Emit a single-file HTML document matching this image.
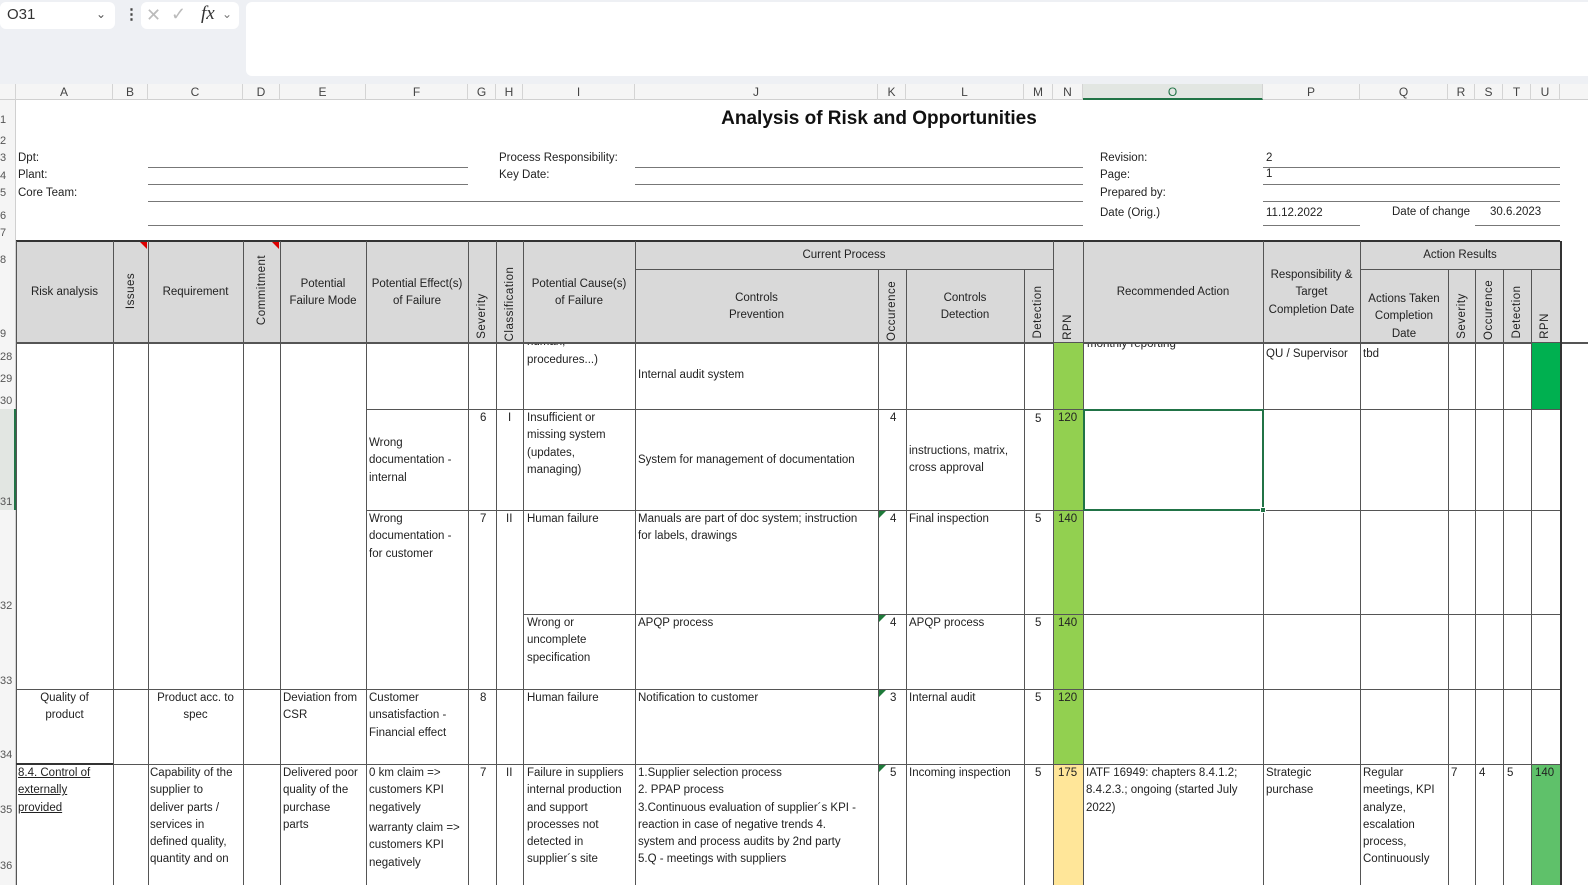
<!DOCTYPE html>
<html><head><meta charset="utf-8"><style>
*{margin:0;padding:0;box-sizing:border-box}
body{width:1588px;height:885px;overflow:hidden;background:#fff;font-family:"Liberation Sans",Arial,sans-serif;position:relative;color:#222}
div{position:absolute}
.v{width:1px;background:#555}
.h{height:1px;background:#555}
.t{font-size:11.5px;line-height:17.3px;white-space:pre-line}
.c{text-align:center}
.rot{transform:rotate(-90deg);transform-origin:center;font-size:11.5px;white-space:nowrap;text-align:center;letter-spacing:.5px}
.ch{top:84px;height:16px;font-size:12px;color:#444;text-align:center;line-height:16px;border-right:1px solid #d4d4d4}
.rn{left:0;font-size:11px;color:#555;width:14px;text-align:left}
.ul{height:1px;background:#777}
.tri{width:0;height:0;border-top:7px solid #1e7a3a;border-right:7px solid transparent}
</style></head><body>
<!-- formula bar -->
<div style="left:0;top:0;width:1588px;height:84px;background:#eef0f4"></div>
<div style="left:0;top:2px;width:115px;height:27px;background:#fff;border-radius:6px"></div>
<div style="left:7px;top:6px;font-size:15px;color:#333">O31</div>
<div style="left:96px;top:7px;font-size:12px;color:#555">&#8964;</div>
<div style="left:124px;top:5px;font-size:15px;color:#444;font-weight:bold">&#8942;</div>
<div style="left:141px;top:2px;width:98px;height:27px;background:#fff;border-radius:6px"></div>
<div style="left:146px;top:5px;font-size:18px;color:#bbb">&#10005;</div>
<div style="left:171px;top:4px;font-size:18px;color:#bbb">&#10003;</div>
<div style="left:201px;top:3px;font-size:19px;font-style:italic;font-family:'Liberation Serif',serif;color:#333">fx</div>
<div style="left:222px;top:7px;font-size:12px;color:#777">&#8964;</div>
<div style="left:246px;top:2px;width:1342px;height:74px;background:#fff;border-radius:6px 0 0 6px"></div>
<!-- column headers -->
<div style="left:0;top:84px;width:1588px;height:16px;background:#f5f5f5;border-bottom:1px solid #d0d0d0"></div>
<div class="ch" style="left:0;width:16px"></div>
<div class="ch" style="left:16px;width:97px">A</div><div class="ch" style="left:113px;width:35px">B</div><div class="ch" style="left:148px;width:95px">C</div><div class="ch" style="left:243px;width:37px">D</div><div class="ch" style="left:280px;width:86px">E</div><div class="ch" style="left:366px;width:102px">F</div><div class="ch" style="left:468px;width:28px">G</div><div class="ch" style="left:496px;width:27px">H</div><div class="ch" style="left:523px;width:112px">I</div><div class="ch" style="left:635px;width:243px">J</div><div class="ch" style="left:878px;width:28px">K</div><div class="ch" style="left:906px;width:118px">L</div><div class="ch" style="left:1024px;width:29px">M</div><div class="ch" style="left:1053px;width:30px">N</div><div class="ch" style="left:1083px;width:180px;background:#e2e6e2;border-bottom:2px solid #217346;color:#217346">O</div><div class="ch" style="left:1263px;width:97px">P</div><div class="ch" style="left:1360px;width:88px">Q</div><div class="ch" style="left:1448px;width:27px">R</div><div class="ch" style="left:1475px;width:28px">S</div><div class="ch" style="left:1503px;width:28px">T</div><div class="ch" style="left:1531px;width:29px">U</div>
<!-- row header col -->
<div style="left:0;top:100px;width:16px;height:785px;background:#f5f5f5;border-right:1px solid #d0d0d0"></div>
<div style="left:0;top:409px;width:16px;height:101px;background:#e2e6e2;border-right:2px solid #217346"></div>
<div class="rn" style="top:114px">1</div><div class="rn" style="top:135px">2</div><div class="rn" style="top:152px">3</div><div class="rn" style="top:170px">4</div><div class="rn" style="top:187px">5</div><div class="rn" style="top:210px">6</div><div class="rn" style="top:227px">7</div><div class="rn" style="top:254px">8</div><div class="rn" style="top:328px">9</div><div class="rn" style="top:351px">28</div><div class="rn" style="top:373px">29</div><div class="rn" style="top:395px">30</div><div class="rn" style="top:496px">31</div><div class="rn" style="top:600px">32</div><div class="rn" style="top:675px">33</div><div class="rn" style="top:749px">34</div><div class="rn" style="top:804px">35</div><div class="rn" style="top:860px">36</div>
<!-- title/form -->
<div style="left:635px;top:108px;width:488px;text-align:center;font-size:19px;font-weight:bold;color:#111">Analysis of Risk and Opportunities</div>
<div class="t" style="left:18px;top:150px">Dpt:</div><div class="t" style="left:18px;top:167px">Plant:</div><div class="t" style="left:18px;top:185px">Core Team:</div>
<div class="t" style="left:499px;top:150px">Process Responsibility:</div><div class="t" style="left:499px;top:167px">Key Date:</div>
<div class="t" style="left:1100px;top:150px">Revision:</div><div class="t" style="left:1100px;top:167px">Page:</div><div class="t" style="left:1100px;top:185px">Prepared by:</div><div class="t" style="left:1100px;top:205px">Date (Orig.)</div>
<div class="t" style="left:1266px;top:150px">2</div><div class="t" style="left:1266px;top:166px">1</div><div class="t" style="left:1266px;top:205px">11.12.2022</div><div class="t" style="left:1392px;top:204px">Date of change</div><div class="t" style="left:1490px;top:204px">30.6.2023</div>
<div class="ul" style="left:148px;top:167px;width:320px"></div><div class="ul" style="left:148px;top:184px;width:320px"></div>
<div class="ul" style="left:635px;top:167px;width:448px"></div><div class="ul" style="left:635px;top:184px;width:448px"></div>
<div class="ul" style="left:148px;top:201px;width:935px"></div><div class="ul" style="left:148px;top:225px;width:935px"></div>
<div class="ul" style="left:1263px;top:167px;width:297px"></div><div class="ul" style="left:1263px;top:184px;width:297px"></div><div class="ul" style="left:1263px;top:201px;width:297px"></div>
<div class="ul" style="left:1263px;top:225px;width:97px"></div><div class="ul" style="left:1475px;top:225px;width:85px"></div>
<!-- header band -->
<div style="left:16px;top:241px;width:1544px;height:102px;background:#d9d9d9"></div>
<div style="left:16px;top:240px;width:1544px;height:2px;background:#333"></div>
<div style="left:16px;top:342px;width:1572px;height:2px;background:#555"></div>
<div class="h" style="left:635px;top:269px;width:418px"></div><div class="h" style="left:1360px;top:269px;width:200px"></div>
<!-- green/yellow fills -->
<div style="left:1053px;top:343px;width:30px;height:421px;background:#92d050"></div>
<div style="left:1053px;top:764px;width:30px;height:121px;background:#ffe699"></div>
<div style="left:1531px;top:343px;width:29px;height:66px;background:#00b050"></div>
<div style="left:1531px;top:764px;width:29px;height:121px;background:#5fc16a"></div>
<!-- vertical lines -->
<div class="v" style="left:16px;top:241px;height:644px"></div>
<div class="v" style="left:113px;top:241px;height:644px"></div><div class="v" style="left:148px;top:241px;height:644px"></div><div class="v" style="left:243px;top:241px;height:644px"></div><div class="v" style="left:280px;top:241px;height:644px"></div><div class="v" style="left:366px;top:241px;height:644px"></div><div class="v" style="left:468px;top:241px;height:644px"></div><div class="v" style="left:496px;top:241px;height:644px"></div><div class="v" style="left:523px;top:241px;height:644px"></div><div class="v" style="left:635px;top:241px;height:644px"></div>
<div class="v" style="left:878px;top:269px;height:616px"></div><div class="v" style="left:906px;top:269px;height:616px"></div><div class="v" style="left:1024px;top:269px;height:616px"></div>
<div class="v" style="left:1053px;top:241px;height:644px"></div><div class="v" style="left:1083px;top:241px;height:644px"></div><div class="v" style="left:1263px;top:241px;height:644px"></div><div class="v" style="left:1360px;top:241px;height:644px"></div>
<div class="v" style="left:1448px;top:269px;height:616px"></div><div class="v" style="left:1475px;top:269px;height:616px"></div><div class="v" style="left:1503px;top:269px;height:616px"></div><div class="v" style="left:1531px;top:269px;height:616px"></div>
<div class="v" style="left:1560px;top:241px;height:644px;width:2px;background:#333"></div>
<!-- horizontal data lines -->
<div class="h" style="left:366px;top:409px;width:1194px"></div>
<div class="h" style="left:366px;top:510px;width:1194px"></div>
<div class="h" style="left:523px;top:614px;width:1037px"></div>
<div class="h" style="left:16px;top:689px;width:1544px"></div>
<div class="h" style="left:16px;top:764px;width:1544px"></div>
<div style="left:16px;top:763px;width:97px;height:2px;background:#333"></div>
<!-- selection -->
<div style="left:1083px;top:409px;width:181px;height:102px;border:2px solid #217346"></div>
<div style="left:1260px;top:507px;width:6px;height:6px;background:#217346;border:1px solid #fff"></div>
<!-- red comment marks -->
<div style="left:140px;top:242px;width:0;height:0;border-top:7px solid #d00;border-left:7px solid transparent"></div>
<div style="left:272px;top:242px;width:0;height:0;border-top:7px solid #d00;border-left:7px solid transparent"></div>
<!-- header text -->
<div class="t c" style="left:16px;top:284px;width:97px">Risk analysis</div>
<div class="rot" style="left:101px;top:285px;width:60px">Issues</div>
<div class="t c" style="left:148px;top:284px;width:95px">Requirement</div>
<div class="rot" style="left:222px;top:284px;width:80px">Commitment</div>
<div class="t c" style="left:280px;top:276px;width:86px">Potential
Failure Mode</div>
<div class="t c" style="left:366px;top:276px;width:102px">Potential Effect(s)
of Failure</div>
<div class="rot" style="left:452px;top:310px;width:60px">Severity</div>
<div class="rot" style="left:470px;top:298px;width:80px">Classification</div>
<div class="t c" style="left:523px;top:276px;width:112px">Potential Cause(s)
of Failure</div>
<div class="t c" style="left:635px;top:247px;width:418px">Current Process</div>
<div class="t c" style="left:635px;top:290px;width:243px">Controls
Prevention</div>
<div class="rot" style="left:862px;top:305px;width:60px">Occurence</div>
<div class="t c" style="left:906px;top:290px;width:118px">Controls
Detection</div>
<div class="rot" style="left:1008px;top:306px;width:60px">Detection</div>
<div class="rot" style="left:1048px;top:321px;width:40px">RPN</div>
<div class="t c" style="left:1083px;top:284px;width:180px">Recommended Action</div>
<div class="t c" style="left:1263px;top:267px;width:97px">Responsibility &amp;
Target
Completion Date</div>
<div class="t c" style="left:1360px;top:247px;width:200px">Action Results</div>
<div class="t c" style="left:1360px;top:291px;width:88px">Actions Taken
Completion
Date</div>
<div class="rot" style="left:1432px;top:310px;width:60px">Severity</div>
<div class="rot" style="left:1459px;top:304px;width:60px">Occurence</div>
<div class="rot" style="left:1487px;top:306px;width:60px">Detection</div>
<div class="rot" style="left:1525px;top:320px;width:40px">RPN</div>
<!-- data -->
<div style="left:524px;top:344px;width:110px;height:8px;overflow:hidden"><div class="t" style="left:3px;top:-10px">human,</div></div>
<div class="t" style="left:527px;top:352px">procedures...)</div>
<div class="t" style="left:638px;top:367px">Internal audit system</div>
<div style="left:907px;top:344px;width:116px;height:6px;overflow:hidden"><div class="t" style="left:3px;top:-11px">evaluation</div></div>
<div style="left:1084px;top:344px;width:178px;height:9px;overflow:hidden"><div class="t" style="left:3px;top:-8px">monthly reporting</div></div>
<div class="t" style="left:1266px;top:346px">QU / Supervisor</div>
<div class="t" style="left:1363px;top:346px">tbd</div>

<div class="t" style="left:369px;top:435px">Wrong
documentation -
internal</div>
<div class="t" style="left:480px;top:410px">6</div><div class="t" style="left:508px;top:410px">I</div>
<div class="t" style="left:527px;top:410px">Insufficient or
missing system
(updates,
managing)</div>
<div class="t" style="left:638px;top:452px">System for management of documentation</div>
<div class="t" style="left:890px;top:410px">4</div>
<div class="t" style="left:909px;top:443px">instructions, matrix,
cross approval</div>
<div class="t" style="left:1035px;top:411px">5</div><div class="t" style="left:1058px;top:410px">120</div>

<div class="t" style="left:369px;top:511px">Wrong
documentation -
for customer</div>
<div class="t" style="left:480px;top:511px">7</div><div class="t" style="left:506px;top:511px">II</div>
<div class="t" style="left:527px;top:511px">Human failure</div>
<div class="t" style="left:638px;top:511px">Manuals are part of doc system; instruction
for labels, drawings</div>
<div class="tri" style="left:879px;top:511px"></div>
<div class="t" style="left:890px;top:511px">4</div>
<div class="t" style="left:909px;top:511px">Final inspection</div>
<div class="t" style="left:1035px;top:511px">5</div><div class="t" style="left:1058px;top:511px">140</div>

<div class="t" style="left:527px;top:615px">Wrong or
uncomplete
specification</div>
<div class="t" style="left:638px;top:615px">APQP process</div>
<div class="tri" style="left:879px;top:615px"></div>
<div class="t" style="left:890px;top:615px">4</div>
<div class="t" style="left:909px;top:615px">APQP process</div>
<div class="t" style="left:1035px;top:615px">5</div><div class="t" style="left:1058px;top:615px">140</div>

<div class="t c" style="left:16px;top:690px;width:97px">Quality of
product</div>
<div class="t c" style="left:148px;top:690px;width:95px">Product acc. to
spec</div>
<div class="t" style="left:283px;top:690px">Deviation from
CSR</div>
<div class="t" style="left:369px;top:690px">Customer
unsatisfaction -
Financial effect</div>
<div class="t" style="left:480px;top:690px">8</div>
<div class="t" style="left:527px;top:690px">Human failure</div>
<div class="t" style="left:638px;top:690px">Notification to customer</div>
<div class="tri" style="left:879px;top:690px"></div>
<div class="t" style="left:890px;top:690px">3</div>
<div class="t" style="left:909px;top:690px">Internal audit</div>
<div class="t" style="left:1035px;top:690px">5</div><div class="t" style="left:1058px;top:690px">120</div>

<div class="t" style="left:18px;top:765px;text-decoration:underline;color:#222">8.4. Control of
externally
provided</div>
<div class="t" style="left:150px;top:765px">Capability of the
supplier to
deliver  parts /
services in
defined quality,
quantity and on</div>
<div class="t" style="left:283px;top:765px">Delivered poor
quality of the
purchase
parts</div>
<div class="t" style="left:369px;top:765px">0 km claim =&gt;
customers KPI
negatively</div>
<div class="t" style="left:369px;top:820px">warranty claim =&gt;
customers KPI
negatively</div>
<div class="t" style="left:480px;top:765px">7</div><div class="t" style="left:506px;top:765px">II</div>
<div class="t" style="left:527px;top:765px">Failure in suppliers
internal production
and support
processes not
detected in
supplier´s site</div>
<div class="t" style="left:638px;top:765px">1.Supplier selection process
2. PPAP process
3.Continuous evaluation of supplier´s KPI -
reaction in case of negative trends 4.
system and process audits by 2nd party
5.Q - meetings with suppliers</div>
<div class="tri" style="left:879px;top:765px"></div>
<div class="t" style="left:890px;top:765px">5</div>
<div class="t" style="left:909px;top:765px">Incoming inspection</div>
<div class="t" style="left:1035px;top:765px">5</div><div class="t" style="left:1058px;top:765px">175</div>
<div class="t" style="left:1086px;top:765px">IATF 16949: chapters 8.4.1.2;
8.4.2.3.; ongoing (started July
2022)</div>
<div class="t" style="left:1266px;top:765px">Strategic
purchase</div>
<div class="t" style="left:1363px;top:765px">Regular
meetings, KPI
analyze,
escalation
process,
Continuously</div>
<div class="t" style="left:1451px;top:765px">7</div><div class="t" style="left:1479px;top:765px">4</div><div class="t" style="left:1507px;top:765px">5</div><div class="t" style="left:1535px;top:765px">140</div>
</body></html>
